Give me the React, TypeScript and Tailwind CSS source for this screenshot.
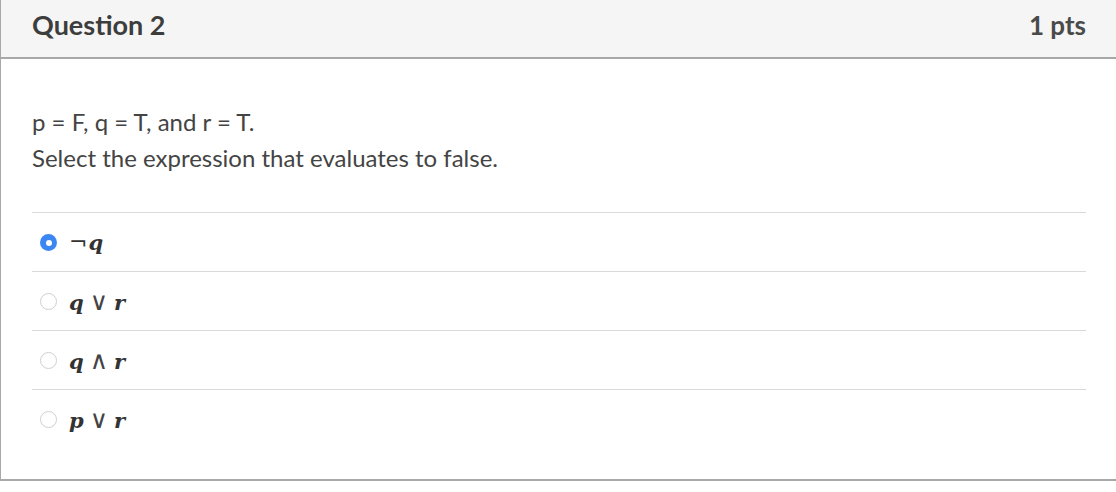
export default function App() {
  const op = (s: string) => (
    <span className="not-italic mx-[6px] text-[25px] leading-none text-[#444]" style={{ fontFamily: "'DejaVu Serif', serif", fontWeight: 400 }}>{s}</span>
  );
  const options = [
    { sel: true, expr: <><span className="not-italic text-[22px] leading-none mr-[1px]" style={{ fontFamily: "'DejaVu Serif', serif", fontWeight: 400 }}>¬</span><i>q</i></> },
    { sel: false, expr: <><i>q</i>{op("∨")}<i>r</i></> },
    { sel: false, expr: <><i>q</i>{op("∧")}<i>r</i></> },
    { sel: false, expr: <><i>p</i>{op("∨")}<i>r</i></> },
  ];
  return (
    <div className="w-[1116px] h-[492px] bg-white" style={{ fontFamily: "Lato, 'Noto Sans', sans-serif" }}>
      <div className="h-[481px] border-l border-l-[#a8a8a8] border-b-2 border-b-[#a8a8a8] flex flex-col">
        <div className="h-[59px] bg-[#f5f5f5] border-b-2 border-b-[#a8a8a8] flex items-center justify-between pl-[31px] pr-[30px] pb-[6px]">
          <div className="text-[27px] font-bold text-[#3d3d3d]">Question 2</div>
          <div className="text-[26px] font-bold text-[#4a4a4a]">1 pts</div>
        </div>
        <div className="pl-[31px] pr-[30px] pt-[45px] text-[24px] text-[#444] leading-[36px]">
          <div>p = F, q = T, and r = T.</div>
          <div>Select the expression that evaluates to false.</div>
        </div>
        <div className="ml-[31px] mr-[30px] mt-[36px]">
          {options.map((o, i) => (
            <div key={i} className="border-t border-t-[#d9d9d9] h-[59px] flex items-center pl-[8px] pt-[1px]">
              {o.sel ? (
                <div className="w-[17px] h-[17px] rounded-full bg-[#3b86f2] flex items-center justify-center">
                  <div className="w-[6px] h-[6px] rounded-full bg-white" />
                </div>
              ) : (
                <div className="w-[17px] h-[17px] rounded-full border border-[#cfcfcf] bg-white" />
              )}
              <div className="ml-[12px] text-[21px] text-[#333] font-bold italic leading-none flex items-baseline" style={{ fontFamily: "'DejaVu Serif', 'Liberation Serif', serif" }}>
                {o.expr}
              </div>
            </div>
          ))}
        </div>
      </div>
    </div>
  );
}
